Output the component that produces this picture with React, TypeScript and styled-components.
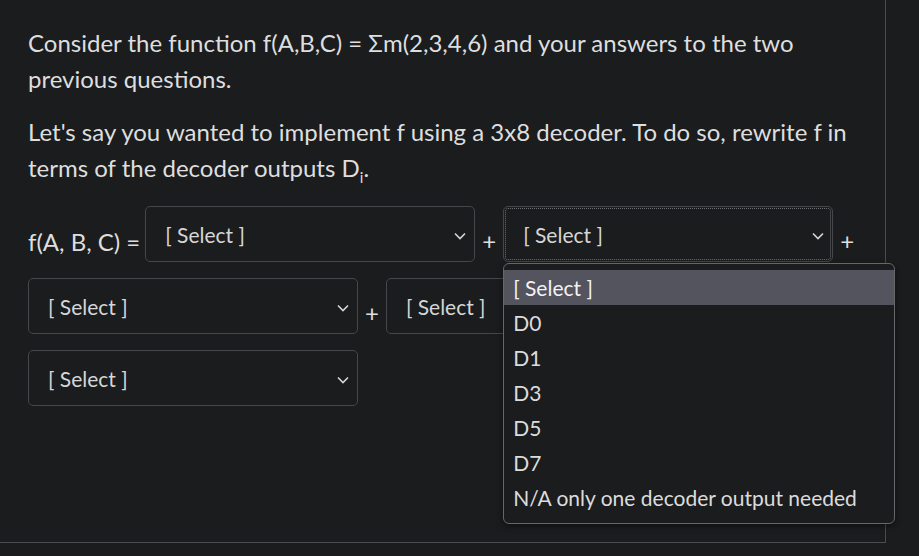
import styled, { createGlobalStyle } from 'styled-components';

const GlobalStyle = createGlobalStyle`
  html, body {
    margin: 0;
    padding: 0;
    background: #1b1c1e;
    overflow: hidden;
  }
  body {
    font-family: Lato, "Noto Sans", "Liberation Sans", sans-serif;
    color: #dedede;
  }
`;

const Card = styled.div`
  box-sizing: border-box;
  width: 887px;
  height: 544px;
  margin: -1px 0 0 -1px;
  border: 1px solid #4b4c4f;
  padding: 25px 26px 0 28px;
`;

const Paragraph = styled.p`
  margin: 0 0 17px;
  font-size: 24px;
  line-height: 36px;
`;

const Sub = styled.sub`
  font-size: 15px;
  line-height: 0;
`;

const Answer = styled.div`
  display: flex;
  flex-wrap: wrap;
  align-items: center;
  column-gap: 7px;
  row-gap: 16px;
  margin-top: 20px;
`;

const Label = styled.span`
  font-size: 24px;
  padding-top: 14px;
  margin-right: -2px;
`;

const Plus = styled.span`
  font-size: 24px;
  padding-top: 12px;
`;

const SelectWrap = styled.div`
  position: relative;
`;

const SelectBox = styled.div<{ $focused?: boolean }>`
  box-sizing: border-box;
  width: 330px;
  height: 56px;
  display: flex;
  align-items: center;
  justify-content: space-between;
  padding: 0 8px 0 19px;
  border: 1px solid #46474a;
  border-radius: 5px;
  background: #1b1c1e;
  font-size: 21px;
  color: #d6d6d6;
  outline: ${(p) => (p.$focused ? '1px dotted #6e6f73' : 'none')};
  outline-offset: -3px;
`;

const Chevron = styled.svg`
  width: 12px;
  height: 8px;
  margin-top: 4px;
`;

const Menu = styled.ul`
  position: absolute;
  top: 57px;
  left: 0;
  width: 392px;
  box-sizing: border-box;
  margin: 0;
  padding: 6px 0 8px;
  list-style: none;
  background: #1b1c1e;
  border: 1px solid #66676b;
  border-radius: 6px;
  box-shadow: 0 2px 6px rgba(0, 0, 0, 0.5);
  z-index: 10;
`;

const Option = styled.li<{ $active?: boolean }>`
  height: 35px;
  line-height: 35px;
  padding-left: 9px;
  font-size: 21px;
  color: ${(p) => (p.$active ? '#f2f2f2' : '#dcdcdc')};
  background: ${(p) => (p.$active ? '#54545f' : 'transparent')};
`;

const options = ['[ Select ]', 'D0', 'D1', 'D3', 'D5', 'D7', 'N/A only one decoder output needed'];

const Select = ({ focused, open }: { focused?: boolean; open?: boolean }) => (
  <SelectWrap>
    <SelectBox $focused={focused}>
      <span>[ Select ]</span>
      <Chevron viewBox="0 0 12 8">
        <path d="M1 1.5 L6 6.5 L11 1.5" fill="none" stroke="#d6d6d6" strokeWidth="1.6" />
      </Chevron>
    </SelectBox>
    {open && (
      <Menu>
        {options.map((o, i) => (
          <Option key={o} $active={i === 0}>
            {o}
          </Option>
        ))}
      </Menu>
    )}
  </SelectWrap>
);

const App = () => (
  <>
    <GlobalStyle />
    <Card>
      <Paragraph>
        Consider the function f(A,B,C) = Σm(2,3,4,6) and your answers to the two previous questions.
      </Paragraph>
      <Paragraph>
        Let's say you wanted to implement f using a 3x8 decoder. To do so, rewrite f in terms of the
        decoder outputs D<Sub>i</Sub>.
      </Paragraph>
      <Answer>
        <Label>f(A, B, C) =</Label>
        <Select />
        <Plus>+</Plus>
        <Select focused open />
        <Plus>+</Plus>
        <Select />
        <Plus>+</Plus>
        <Select />
        <Plus>+</Plus>
        <Select />
      </Answer>
    </Card>
  </>
);

export default App;
